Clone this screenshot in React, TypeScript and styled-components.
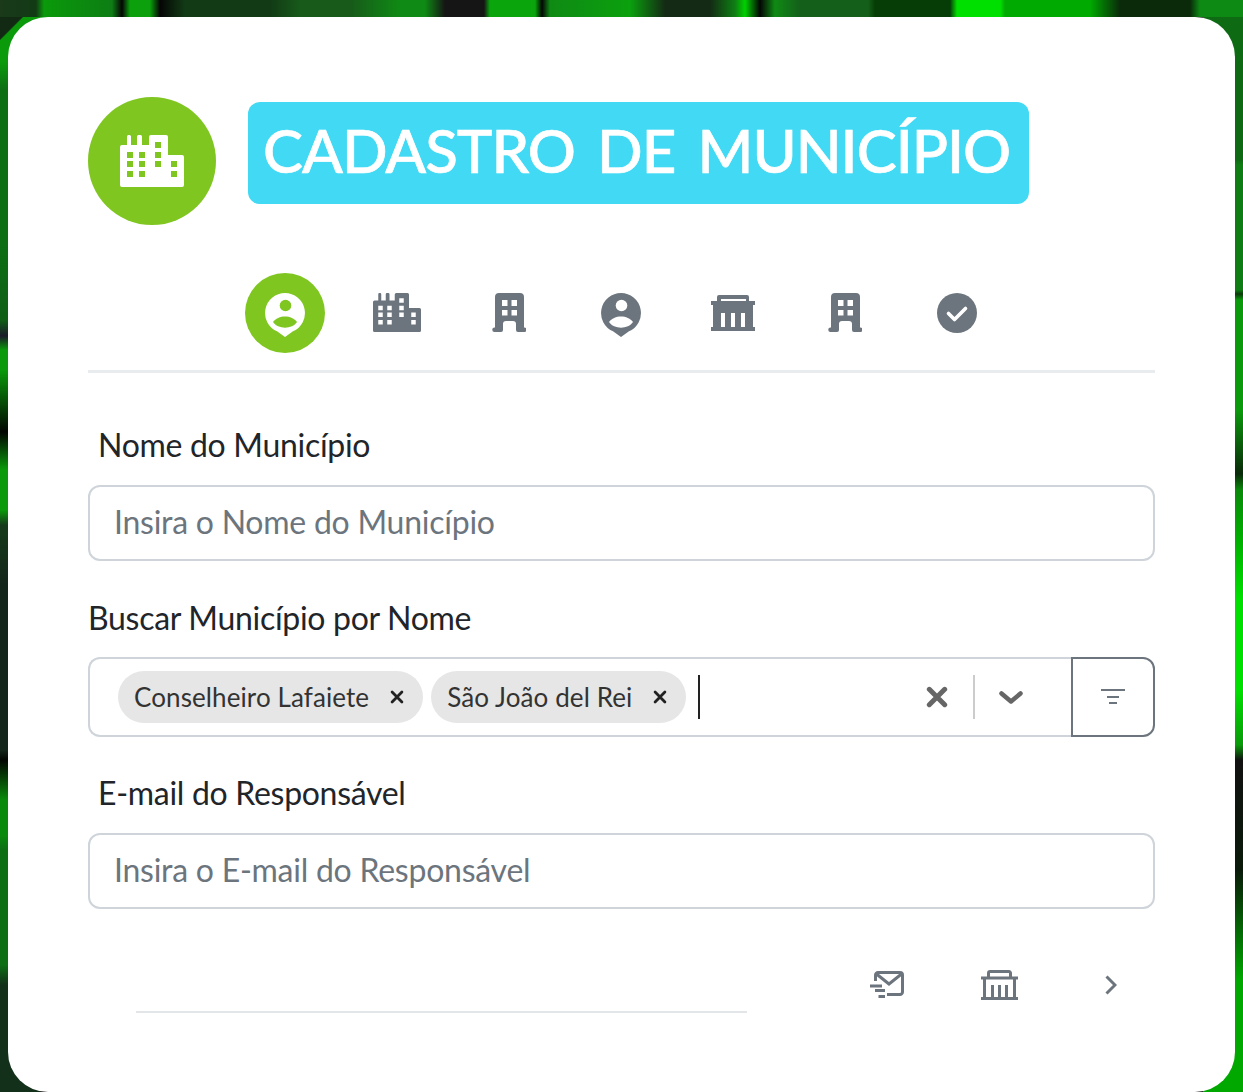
import React, { FC } from "react";
import styled, { createGlobalStyle } from "styled-components";

const GlobalStyle = createGlobalStyle`
  html, body {
    margin: 0;
    padding: 0;
    height: 100%;
    overflow: hidden;
  }
  * {
    box-sizing: border-box;
  }
`;

const GRAY = "#6c757d";
const GREEN = "#7fc621";

const CityIcon: FC<{ width: number; color: string }> = ({ width, color }) => (
  <svg width={width} viewBox="0 0 64 52" fill={color}>
    <path
      fillRule="evenodd"
      d="M7 10V1.5A1.5 1.5 0 0 1 8.500 0h1A1.500 1.500 0 0 1 11 1.500V10h6V1.500A1.500 1.500 0 0 1 18.500 0h2A1.500 1.500 0 0 1 22 1.500V10h7V2a2 2 0 0 1 2-2h15a2 2 0 0 1 2 2v18h14a2 2 0 0 1 2 2v28a2 2 0 0 1-2 2H2a2 2 0 0 1-2-2V12a2 2 0 0 1 2-2zM7 17v6h6v-6zM19 17v6h6v-6zM35 7v6h6V7zM35 17v6h6v-6zM35 26v6h6v-6zM7 26v6h6v-6zM19 26v6h6v-6zM51 26v6h6v-6zM7 36v6h6v-6zM19 36v6h6v-6zM51 36v6h6v-6z"
    />
  </svg>
);

const PersonPinIcon: FC<{ color: string; cut: string }> = ({ color, cut }) => (
  <svg width="40" height="44" viewBox="0 0 40 44">
    <path
      fill={color}
      d="M20 0a20 20 0 0 1 8 38.300L20 44l-8-5.700A20 20 0 0 1 20 0z"
    />
    <circle cx="20.500" cy="12.500" r="5.800" fill={cut} />
    <path fill={cut} d="M8 29c5-7.500 19-7.500 24 0-5 7.500-19 7.500-24 0z" />
  </svg>
);

const BuildingIcon: FC = () => (
  <svg width="35" height="39" viewBox="-2 0 35 39" fill={GRAY}>
    <path
      fillRule="evenodd"
      d="M6 0h21a4 4 0 0 1 4 4v30.500h.500a2.250 2.250 0 0 1 0 4.500H25a2 2 0 0 1-2-2v-6a3 3 0 0 0-3-3h-7a3 3 0 0 0-3 3v6a2 2 0 0 1-2 2H1.500a2.250 2.250 0 0 1 0-4.500H2V4a4 4 0 0 1 4-4zM9 7v6h5.500V7zM18.500 7v6H24V7zM9 17v5.500h5.500V17zM18.500 17v5.500H24V17z"
    />
  </svg>
);

const MuseumIcon: FC = () => (
  <svg width="44" height="38" viewBox="0 -2 44 38" fill={GRAY}>
    <path
      fillRule="evenodd"
      d="M8 0h28a2 2 0 0 1 2 2v4h6v4h-2v22h2v4H0v-4h2V10H0V6h6V2a2 2 0 0 1 2-2zM10 4v2h25V4zM10 18v14h4V18zM20 18v14h4V18zM30 18v14h4V18z"
    />
  </svg>
);

const CheckCircleIcon: FC = () => (
  <svg width="40" height="40" viewBox="0 0 40 40">
    <circle cx="20" cy="20" r="20" fill={GRAY} />
    <path
      d="M11.500 20.500l6 6 11-11"
      fill="none"
      stroke="#fff"
      strokeWidth="3.600"
      strokeLinecap="round"
      strokeLinejoin="round"
    />
  </svg>
);

const MailFastIcon: FC = () => (
  <svg width="34" height="28" viewBox="0 0 34 28" fill="none" stroke={GRAY} strokeWidth="3">
    <path d="M5.500 10V4a2.500 2.500 0 0 1 2.500-2.500h22A2.500 2.500 0 0 1 32.500 4v17a2.500 2.500 0 0 1-2.500 2.500H17" />
    <path d="M6.500 3l12.500 10L31.500 3" />
    <path d="M0 15h12M5 19.500h10M8.500 25.500h6.500" />
  </svg>
);

const MuseumOutlineIcon: FC = () => (
  <svg width="37" height="30" viewBox="0 0 37 30" fill="none" stroke={GRAY} strokeWidth="3">
    <path d="M7.500 8V3a1.500 1.500 0 0 1 1.500-1.500h19A1.500 1.500 0 0 1 29.500 3v5" />
    <path d="M0 8h37M0 28.500h37M3.500 8v20M33.500 8v20" />
    <path d="M11.500 15v13M18.500 15v13M25.500 15v13" />
  </svg>
);

const ChevronRightIcon: FC = () => (
  <svg width="12" height="20" viewBox="0 0 12 20" fill="none" stroke={GRAY} strokeWidth="3">
    <path d="M1.500 1.500L10 10l-8.500 8.500" />
  </svg>
);

const CrossIcon: FC<{ size: number; weight: number; color: string }> = ({
  size,
  weight,
  color,
}) => (
  <svg width={size} height={size} viewBox="0 0 20 20" fill="none" stroke={color} strokeWidth={weight} strokeLinecap="round">
    <path d="M3 3l14 14M17 3L3 17" />
  </svg>
);

const ChevronDownIcon: FC = () => (
  <svg width="24" height="13" viewBox="0 0 24 13" fill="none" stroke="#666" strokeWidth="4.500" strokeLinecap="round" strokeLinejoin="round">
    <path d="M2.500 2.500L12 10.500l9.500-8" />
  </svg>
);

const FilterIcon: FC = () => (
  <svg width="24" height="16" viewBox="0 0 24 16" fill="none" stroke={GRAY} strokeWidth="2">
    <path d="M0 1h24M6 8h12M8 14h8" />
  </svg>
);

const steps = [
  <PersonPinIcon color="#fff" cut={GREEN} />,
  <CityIcon width={48} color={GRAY} />,
  <BuildingIcon />,
  <PersonPinIcon color={GRAY} cut="#fff" />,
  <MuseumIcon />,
  <BuildingIcon />,
  <CheckCircleIcon />,
];

const cities = ["Conselheiro Lafaiete", "São João del Rei"];

const App: FC = () => (
  <Page>
    <GlobalStyle />
    <Card>
      <Header>
        <Logo>
          <CityIcon width={64} color="#fff" />
        </Logo>
        <Title>CADASTRO DE MUNICÍPIO</Title>
      </Header>

      <Steps>
        {steps.map((icon, index) => (
          <Step key={index}>
            <StepIcon $active={index === 0}>{icon}</StepIcon>
          </Step>
        ))}
      </Steps>

      <Field $top={48}>
        <Label $indent>Nome do Município</Label>
        <TextInput placeholder="Insira o Nome do Município" />
      </Field>

      <Field $top={33}>
        <SearchLabel>Buscar Município por Nome</SearchLabel>
        <SearchBox>
          <Select>
            <Chips>
              {cities.map((city) => (
                <Chip key={city}>
                  {city}
                  <CrossIcon size={14} weight={4} color="#222" />
                </Chip>
              ))}
              <Caret />
            </Chips>
            <ClearButton>
              <CrossIcon size={22} weight={4.500} color="#666" />
            </ClearButton>
            <Separator />
            <ArrowButton>
              <ChevronDownIcon />
            </ArrowButton>
          </Select>
          <FilterButton>
            <FilterIcon />
          </FilterButton>
        </SearchBox>
      </Field>

      <Field $top={32}>
        <Label $indent>E-mail do Responsável</Label>
        <TextInput placeholder="Insira o E-mail do Responsável" />
      </Field>

      <Footer>
        <FooterLine />
        <FooterIcons>
          <Step>
            <MailFastIcon />
          </Step>
          <Step>
            <MuseumOutlineIcon />
          </Step>
          <Step>
            <ChevronRightIcon />
          </Step>
        </FooterIcons>
      </Footer>
    </Card>
  </Page>
);

const Page = styled.div`
  height: 1092px;
  padding: 17px 8px 0;
  font-family: "Lato", "Noto Sans", sans-serif;
  color: #212529;
  background:
    linear-gradient(
        90deg,
        #1a3a1a 0,
        #123a15 36px,
        #0a9a0a 44px,
        #0d7d14 112px,
        #050505 122px,
        #0ba00c 130px,
        #0ba00c 150px,
        #050505 160px,
        #123a15 185px,
        #123a15 270px,
        #175a1a 300px,
        #175a1a 350px,
        #0f8a14 400px,
        #0f8a14 425px,
        #151515 445px,
        #151515 484px,
        #0aa50c 490px,
        #0aa50c 535px,
        #050505 542px,
        #0f8a14 550px,
        #0ba00e 630px,
        #142a14 665px,
        #142a14 710px,
        #0f7f13 735px,
        #00d000 745px,
        #050505 760px,
        #0f8a14 775px,
        #14601a 800px,
        #14601a 868px,
        #063d06 875px,
        #063d06 950px,
        #00e000 957px,
        #00e000 1000px,
        #00aa00 1005px,
        #00aa00 1090px,
        #0a2a0a 1120px,
        #0a2a0a 1190px,
        #0c8a14 1200px,
        #0c8a14 1243px
      )
      top / 100% 17px no-repeat,
    linear-gradient(135deg, #122a14 0, #122a14 36%, #0a9a0a 38%, #0a9a0a 100%)
      top left / 48px 60px no-repeat,
    linear-gradient(
        180deg,
        #0f6a14 0,
        #0f6a14 160px,
        #0f7d14 165px,
        #0f7d14 290px,
        #0a3a0a 294px,
        #0b9a0c 300px,
        #0b9a0c 410px,
        #0a2a0a 474px,
        #0a8a0a 490px,
        #00b000 540px,
        #00e000 600px,
        #00e000 690px,
        #0a9a0a 745px,
        #111 760px,
        #0a1a0a 870px,
        #00a800 980px,
        #00a800 1092px
      )
      right / 40px 100% no-repeat,
    linear-gradient(
        180deg,
        #0a9a0a 0,
        #0a9a0a 62px,
        #0d6e14 90px,
        #0d6e14 245px,
        #0f5f15 320px,
        #1a1a2a 336px,
        #0a9a0a 350px,
        #0a9a0a 370px,
        #020602 432px,
        #0a9a0a 470px,
        #0a9a0a 510px,
        #153a1a 525px,
        #14261a 585px,
        #14261a 750px,
        #020602 760px,
        #0a8a0c 800px,
        #0a8a0c 835px,
        #0d6e14 850px,
        #0d6e14 965px,
        #12301a 985px,
        #12301a 1092px
      )
      left / 40px 100% no-repeat,
    #111;
`;

const Card = styled.div`
  height: 1075px;
  padding: 80px 80px 0;
  background: #fff;
  border-radius: 40px;
`;

const Header = styled.div`
  display: flex;
  align-items: flex-start;
  gap: 32px;
`;

const Logo = styled.div`
  width: 128px;
  height: 128px;
  border-radius: 50%;
  background: ${GREEN};
  display: flex;
  align-items: center;
  justify-content: center;
  padding-bottom: 1px;
`;

const Title = styled.h1`
  margin: 5px 0 0;
  height: 102px;
  width: 781px;
  padding: 0 15px 6px;
  display: flex;
  align-items: center;
  background: #41d9f3;
  border-radius: 12px;
  color: #fff;
  font-size: 60px;
  font-weight: 500;
  letter-spacing: -1px;
  word-spacing: 8px;
  -webkit-text-stroke: 0.7px #fff;
  white-space: nowrap;
`;

const Steps = styled.div`
  margin-top: 48px;
  padding: 0 2px 17px 0;
  border-bottom: 3px solid #e9ecef;
  display: flex;
  justify-content: center;
`;

const Step = styled.div`
  width: 112px;
  display: flex;
  align-items: center;
  justify-content: center;
`;

const StepIcon = styled.div<{ $active: boolean }>`
  width: 80px;
  height: 80px;
  border-radius: 50%;
  background: ${({ $active }) => ($active ? GREEN : "transparent")};
  display: flex;
  align-items: flex-start;
  justify-content: center;
  padding-top: 20px;
`;

const Field = styled.div<{ $top: number }>`
  margin-top: ${({ $top }) => $top}px;
  display: flex;
  flex-direction: column;
`;

const Label = styled.label<{ $indent?: boolean }>`
  font-size: 32px;
  letter-spacing: -0.3px;
  line-height: 48px;
  height: 48px;
  margin-bottom: 16px;
  padding-left: ${({ $indent }) => ($indent ? "10px" : "0")};
`;

const SearchLabel = styled(Label)`
  margin-bottom: 15px;
`;

const TextInput = styled.input`
  height: 76px;
  padding: 0 24px 3px;
  border: 2px solid #ced4da;
  border-radius: 12px;
  background: #fff;
  color: #212529;
  font-family: inherit;
  font-size: 32px;
  letter-spacing: -0.25px;
  outline: none;
  &::placeholder {
    color: ${GRAY};
    opacity: 1;
  }
`;

const SearchBox = styled.div`
  height: 80px;
  display: flex;
`;

const Select = styled.div`
  flex: 1;
  display: flex;
  align-items: center;
  border: 2px solid #ced4da;
  border-right: none;
  border-radius: 12px 0 0 12px;
`;

const Chips = styled.div`
  flex: 1;
  display: flex;
  align-items: center;
  gap: 8px;
  padding-left: 28px;
`;

const Chip = styled.span`
  height: 52px;
  padding: 0 19px 0 16px;
  display: flex;
  align-items: center;
  gap: 21px;
  background: #e6e6e6;
  border-radius: 26px;
  color: #333;
  font-size: 26px;
  letter-spacing: 0.1px;
  white-space: nowrap;
`;

const Caret = styled.span`
  width: 2px;
  height: 44px;
  margin-left: 4px;
  background: #222;
`;

const ClearButton = styled.span`
  width: 40px;
  display: flex;
  justify-content: center;
  margin-right: 16px;
`;

const Separator = styled.span`
  width: 2px;
  height: 44px;
  background: #ccc;
`;

const ArrowButton = styled.span`
  width: 96px;
  padding-right: 24px;
  display: flex;
  justify-content: center;
`;

const FilterButton = styled.div`
  width: 84px;
  border: 2px solid ${GRAY};
  border-radius: 0 12px 12px 0;
  display: flex;
  align-items: center;
  justify-content: center;
`;

const Footer = styled.div`
  margin-top: 56px;
  margin-right: -12px;
  padding-left: 48px;
  display: flex;
  align-items: flex-start;
  justify-content: space-between;
`;

const FooterLine = styled.div`
  width: 611px;
  height: 2px;
  margin-top: 46px;
  background: #e3e6e8;
`;

const FooterIcons = styled.div`
  height: 40px;
  display: flex;
`;

export default App;
